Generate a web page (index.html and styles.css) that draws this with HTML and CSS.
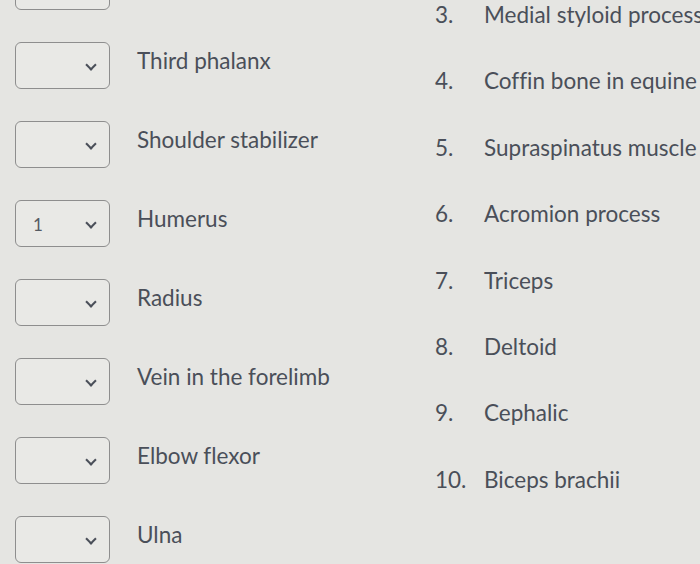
FILE: index.html
```html
<!DOCTYPE html>
<html lang="en">
<head>
    <meta charset="UTF-8">
    <meta name="viewport" content="width=device-width, initial-scale=1.0">
    <title>Matching</title>
    <link rel="stylesheet" href="styles.css">
</head>
<body>
    <div class="page">
        <div class="answers">
            <div class="row row-cut">
                <div class="select"><span class="value"></span><span class="chev"></span></div>
                <span class="label"></span>
            </div>
            <div class="row">
                <div class="select"><span class="value"></span><span class="chev"></span></div>
                <span class="label">Third phalanx</span>
            </div>
            <div class="row">
                <div class="select"><span class="value"></span><span class="chev"></span></div>
                <span class="label">Shoulder stabilizer</span>
            </div>
            <div class="row">
                <div class="select"><span class="value">1</span><span class="chev"></span></div>
                <span class="label">Humerus</span>
            </div>
            <div class="row">
                <div class="select"><span class="value"></span><span class="chev"></span></div>
                <span class="label">Radius</span>
            </div>
            <div class="row">
                <div class="select"><span class="value"></span><span class="chev"></span></div>
                <span class="label">Vein in the forelimb</span>
            </div>
            <div class="row">
                <div class="select"><span class="value"></span><span class="chev"></span></div>
                <span class="label">Elbow flexor</span>
            </div>
            <div class="row">
                <div class="select"><span class="value"></span><span class="chev"></span></div>
                <span class="label">Ulna</span>
            </div>
        </div>

        <ol class="choices">
            <li><span class="num">3.</span><span>Medial styloid process</span></li>
            <li><span class="num">4.</span><span>Coffin bone in equine</span></li>
            <li><span class="num">5.</span><span>Supraspinatus muscle</span></li>
            <li><span class="num">6.</span><span>Acromion process</span></li>
            <li><span class="num">7.</span><span>Triceps</span></li>
            <li><span class="num">8.</span><span>Deltoid</span></li>
            <li><span class="num">9.</span><span>Cephalic</span></li>
            <li><span class="num">10.</span><span>Biceps brachii</span></li>
        </ol>
    </div>
</body>
</html>
```

FILE: styles.css
```css
body {
    margin: 0;
    height: 564px;
    overflow: hidden;
    background-color: #e5e5e2;
    font-family: Lato, "Noto Sans", sans-serif;
    font-variant-ligatures: none;
    color: #4a4f59;
}
.page {
    display: flex;
    align-items: flex-start;
}
.answers {
    flex: none;
    width: 418px;
    padding-left: 15px;
    margin-top: -37px;
    display: flex;
    flex-direction: column;
    gap: 32px;
}
.row {
    display: flex;
    align-items: flex-start;
    gap: 27px;
}
.select {
    width: 95px;
    height: 47px;
    box-sizing: border-box;
    border: 1.5px solid #8e8e8e;
    border-radius: 6px;
    background: #e9e9e6;
    display: flex;
    align-items: center;
    padding: 2px 14px 0 17px;
}
.value {
    flex: 1;
    font-size: 17px;
    color: #555a62;
}
.chev {
    width: 6px;
    height: 6px;
    border-right: 2px solid #4a4f59;
    border-bottom: 2px solid #4a4f59;
    transform: rotate(45deg);
    margin-top: -3px;
}
.label {
    font-size: 22.5px;
    line-height: 27px;
    margin-top: 5px;
}
.choices {
    list-style: none;
    margin: 1px 0 0 0;
    padding: 0;
    display: flex;
    flex-direction: column;
    gap: 39.4px;
    white-space: nowrap;
}
.choices li {
    display: flex;
    font-size: 22.5px;
    line-height: 27px;
}
.num {
    flex: none;
    width: 51px;
    padding-left: 2px;
    box-sizing: border-box;
}
```
